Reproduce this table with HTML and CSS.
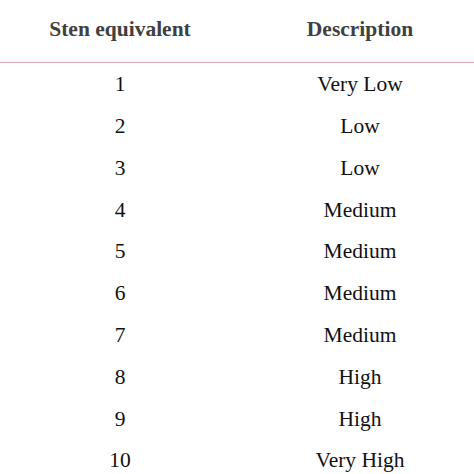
FILE: index.html
```html
<!DOCTYPE html>
<html>
<head>
<meta charset="utf-8">
<link rel="stylesheet" href="styles.css">
</head>
<body>
<div class="table">
  <div class="row head">
    <div class="cell">Sten equivalent</div>
    <div class="cell">Description</div>
  </div>
  <div class="row"><div class="cell">1</div><div class="cell">Very Low</div></div>
  <div class="row"><div class="cell">2</div><div class="cell">Low</div></div>
  <div class="row"><div class="cell">3</div><div class="cell">Low</div></div>
  <div class="row"><div class="cell">4</div><div class="cell">Medium</div></div>
  <div class="row"><div class="cell">5</div><div class="cell">Medium</div></div>
  <div class="row"><div class="cell">6</div><div class="cell">Medium</div></div>
  <div class="row"><div class="cell">7</div><div class="cell">Medium</div></div>
  <div class="row"><div class="cell">8</div><div class="cell">High</div></div>
  <div class="row"><div class="cell">9</div><div class="cell">High</div></div>
  <div class="row"><div class="cell">10</div><div class="cell">Very High</div></div>
</div>
</body>
</html>
```
FILE: styles.css
```css
html, body {
  margin: 0;
  padding: 0;
  background: #ffffff;
  overflow: hidden;
}
.table {
  width: 474px;
  font-family: "Liberation Serif", "DejaVu Serif", serif;
  color: #111;
}
.row {
  display: grid;
  grid-template-columns: 240px 240px;
  height: 41.8px;
  align-items: center;
  font-size: 21.5px;
}
.cell {
  text-align: center;
  line-height: 1;
  padding-top: 2px;
}
.row.head {
  box-sizing: border-box;
  height: 63px;
  border-bottom: 1px solid #d8a9b1;
  align-items: start;
  padding-top: 17px;
  font-weight: bold;
  color: #404040;
  font-size: 21.5px;
}
```
